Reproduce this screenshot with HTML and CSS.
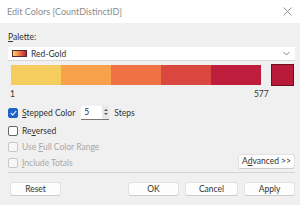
FILE: index.html
```html
<!DOCTYPE html>
<html>
<head>
<meta charset="utf-8">
<link rel="stylesheet" href="styles.css">
</head>
<body>
<div class="dialog">
  <div class="titlebar">
    <span class="title">Edit Colors [CountDistinctID]</span>
    <svg class="close" width="9" height="9" viewBox="0 0 9 9"><path d="M0.5 0.5L8.5 8.5M8.5 0.5L0.5 8.5" stroke="#8a8a8a" stroke-width="0.9"/></svg>
  </div>
  <div class="body">
    <div class="label"><u>P</u>alette:</div>
    <div class="select">
      <span class="pal-icon"></span>
      <span class="sel-text">Red-Gold</span>
      <svg class="chev" width="7" height="5" viewBox="0 0 7 5"><path d="M0.5 1L3.5 4L6.5 1" fill="none" stroke="#777" stroke-width="0.9"/></svg>
    </div>
    <div class="bar-row">
      <div class="bar">
        <span class="seg s1"></span><span class="seg s2"></span><span class="seg s3"></span><span class="seg s4"></span><span class="seg s5"></span>
      </div>
      <div class="swatch"></div>
    </div>
    <div class="range">
      <span>1</span>
      <span class="max">577</span>
    </div>
    <div class="row stepped">
      <span class="cb checked"><svg width="7" height="6" viewBox="0 0 7 6"><path d="M0.8 3.2L2.7 5L6.2 1" fill="none" stroke="#fff" stroke-width="1.1"/></svg></span>
      <span class="txt"><u>S</u>tepped Color</span>
      <div class="spin">
        <span class="spin-val">5</span>
        <span class="spin-btns"><span class="up"></span><span class="dn"></span></span>
      </div>
      <span class="txt">Steps</span>
    </div>
    <div class="row">
      <span class="cb"></span>
      <span class="txt">Re<u>v</u>ersed</span>
    </div>
    <div class="row disabled">
      <span class="cb"></span>
      <span class="txt">Use <u>F</u>ull Color Range</span>
    </div>
    <div class="row disabled last">
      <span class="cb"></span>
      <span class="txt"><u>I</u>nclude Totals</span>
      <button class="btn adv">A<u>d</u>vanced &gt;&gt;</button>
    </div>
    <div class="sep"></div>
    <div class="buttons">
      <button class="btn">Reset</button>
      <div class="right">
        <button class="btn">OK</button>
        <button class="btn">Cancel</button>
        <button class="btn">Apply</button>
      </div>
    </div>
  </div>
</div>
</body>
</html>
```

FILE: styles.css
```css
html, body {
  margin: 0;
  padding: 0;
}
body {
  width: 300px;
  height: 205px;
  overflow: hidden;
  background: #f0f0f0;
  font-family: Lato, "Noto Sans", sans-serif;
  font-size: 8.5px;
  color: #333;
}
u { text-decoration: underline; text-underline-offset: 1px; }
.dialog {
  display: flex;
  flex-direction: column;
  height: 205px;
}
.titlebar {
  height: 23px;
  background: #fff;
  display: flex;
  align-items: center;
  justify-content: space-between;
  padding: 0 7px 0 7px;
  box-sizing: border-box;
}
.title {
  color: #8c8c8c;
  font-size: 9px;
}
.close { margin-right: 1px; }
.body {
  padding: 8px 5px 0 8px;
  display: flex;
  flex-direction: column;
}
.label {
  height: 12px;
  line-height: 12px;
  margin-bottom: 4px;
}
.select {
  height: 13px;
  background: #fff;
  border-bottom: 1px solid #d8d8d8;
  display: flex;
  align-items: center;
  padding: 0 5px 0 4px;
}
.pal-icon {
  width: 13px;
  height: 5px;
  border: 1px solid #5a2a2a;
  background: linear-gradient(to right, #f6d36a, #f29a4a, #e05a3f, #c01f3a);
  margin-right: 4px;
}
.sel-text { flex: 1; }
.bar-row {
  display: flex;
  align-items: flex-start;
  margin-top: 3px;
  padding-left: 3px;
}
.bar {
  display: flex;
  height: 20px;
  margin-top: 1px;
}
.seg { width: 50px; height: 20px; }
.s1 { background: #f5cc5e; }
.s2 { background: #f8a04a; }
.s3 { background: #ee7244; }
.s4 { background: #d9473f; }
.s5 { background: #be1d3c; }
.swatch {
  width: 21px;
  height: 20px;
  margin-left: 10px;
  background: #b91a3a;
  border: 1px solid #6b1020;
}
.range {
  display: flex;
  height: 12px;
  line-height: 12px;
  margin-top: 2px;
  padding-left: 2px;
}
.max { margin-left: 239px; }
.row {
  display: flex;
  align-items: center;
  height: 16px;
}
.stepped { margin-top: 5px; height: 15px; margin-bottom: 3px; }
.cb {
  width: 8px;
  height: 8px;
  border: 1px solid #666;
  border-radius: 2px;
  background: #fff;
  margin-right: 4px;
  display: flex;
  align-items: center;
  justify-content: center;
}
.cb.checked {
  background: #1f64c8;
  border-color: #1f64c8;
}
.disabled { color: #a8a8a8; }
.disabled .cb { border-color: #c8c8c8; background: #f7f7f7; }
.spin {
  display: flex;
  height: 13px;
  margin-left: 6px;
  margin-right: 5px;
  background: #fff;
  border-bottom: 1px solid #777;
}
.spin-val {
  width: 18px;
  padding-left: 3px;
  line-height: 13px;
}
.spin-btns {
  width: 7px;
  background: #e8e8e8;
  display: flex;
  flex-direction: column;
  align-items: center;
  justify-content: center;
  gap: 2px;
}
.up, .dn {
  width: 0; height: 0;
  border-left: 2px solid transparent;
  border-right: 2px solid transparent;
}
.up { border-bottom: 2px solid #555; }
.dn { border-top: 2px solid #555; }
.btn {
  font-family: inherit;
  font-size: 8.5px;
  color: #333;
  background: #fdfdfd;
  border: 1px solid #e2e2e2;
  border-bottom-color: #ccc;
  border-radius: 3px;
  height: 14px;
  padding: 0;
  line-height: 12px;
  width: 51px;
}
.adv {
  margin-left: auto;
  width: 57px;
  height: 15px;
  margin-top: -4px;
}
.sep {
  height: 1px;
  background: #d5d5d5;
  margin-top: 1px;
}
.buttons {
  display: flex;
  justify-content: space-between;
  margin-top: 9px;
  padding-left: 2px;
}
.right {
  display: flex;
  gap: 6px;
}
.right .btn:nth-child(2) { width: 53px; }
```
